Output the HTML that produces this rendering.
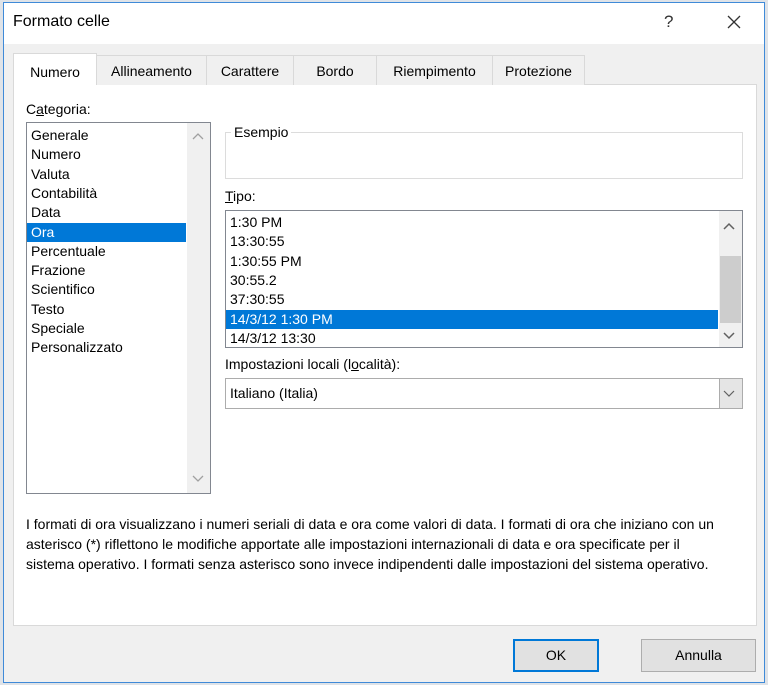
<!DOCTYPE html>
<html><head><meta charset="utf-8"><style>
*{margin:0;padding:0;box-sizing:border-box}
body{width:768px;height:685px;background:#dfe3e8;position:relative;overflow:hidden;font-family:"Liberation Sans",sans-serif;font-size:13.5px;color:#000}
.a{position:absolute}
.win{left:3px;top:2px;width:762px;height:681px;background:#f0f0f0;border:1px solid #3f8ad8}
.title{left:4px;top:3px;width:760px;height:41px;background:#fff}
.tab{top:55px;height:30px;background:#f0f0f0;border:1px solid #d9d9d9;border-bottom:none;text-align:center;line-height:30px;font-size:14px}
.panel{left:13px;top:84px;width:744px;height:542px;background:#fff;border:1px solid #d9d9d9}
.list{background:#fff;border:1px solid #828790}
.it{position:absolute;left:4px;height:19px;line-height:19px;font-size:14px;white-space:nowrap}
.sel{background:#0078d7;color:#fff}
.btn{top:639px;height:33px;background:#e1e1e1;border:1px solid #adadad;text-align:center;line-height:31px;font-size:14px}
</style></head><body>
<div class="a win"></div>
<div class="a title"></div>
<div class="a" style="left:13px;top:13px;font-size:16px">Formato celle</div>
<div class="a" style="left:664px;top:12px;font-size:17px;color:#333">?</div>
<svg class="a" style="left:727px;top:15px" width="14" height="14"><path d="M1 1L13 13M13 1L1 13" stroke="#333" stroke-width="1.3"/></svg>
<div class="a panel"></div>
<div class="a tab" style="left:13px;top:53px;width:84px;height:32px;background:#fff;line-height:36px">Numero</div>
<div class="a tab" style="left:96px;width:111px">Allineamento</div>
<div class="a tab" style="left:206px;width:88px">Carattere</div>
<div class="a tab" style="left:293px;width:84px">Bordo</div>
<div class="a tab" style="left:376px;width:117px">Riempimento</div>
<div class="a tab" style="left:492px;width:93px">Protezione</div>
<div class="a" style="left:26px;top:101px;font-size:14px">C<u>a</u>tegoria:</div>
<div class="a list" style="left:26px;top:122px;width:185px;height:372px">
<div class="a" style="right:0;top:0;width:23px;height:370px;background:#f0f0f0"></div>
<svg class="a" style="left:165px;top:9px" width="12" height="8"><path d="M1 7L6 2L11 7" fill="none" stroke="#a0a0a0" stroke-width="1.3"/></svg>
<svg class="a" style="left:165px;top:352px" width="12" height="8"><path d="M1 1L6 6L11 1" fill="none" stroke="#a0a0a0" stroke-width="1.3"/></svg>
<div class="it" style="top:3px">Generale</div>
<div class="it" style="top:22.3px">Numero</div>
<div class="it" style="top:41.6px">Valuta</div>
<div class="it" style="top:60.9px">Contabilità</div>
<div class="it" style="top:80.2px">Data</div>
<div class="it sel" style="top:99.5px;left:0;width:159px;padding-left:4px">Ora</div>
<div class="it" style="top:118.8px">Percentuale</div>
<div class="it" style="top:138.1px">Frazione</div>
<div class="it" style="top:157.4px">Scientifico</div>
<div class="it" style="top:176.7px">Testo</div>
<div class="it" style="top:196px">Speciale</div>
<div class="it" style="top:215.3px">Personalizzato</div>
</div>
<div class="a" style="left:225px;top:132px;width:518px;height:47px;border:1px solid #dcdcdc"></div>
<div class="a" style="left:231px;top:124px;background:#fff;padding:0 3px;font-size:14px">Esempio</div>
<div class="a" style="left:225px;top:188px;font-size:14px"><u>T</u>ipo:</div>
<div class="a list" style="left:225px;top:210px;width:518px;height:138px">
<div class="a" style="right:0;top:0;width:23px;height:136px;background:#f0f0f0"></div>
<div class="a" style="right:1px;top:45px;width:21px;height:67px;background:#cdcdcd"></div>
<svg class="a" style="left:497px;top:11px" width="12" height="8"><path d="M1 7L6 2L11 7" fill="none" stroke="#606060" stroke-width="1.5"/></svg>
<svg class="a" style="left:497px;top:121px" width="12" height="8"><path d="M1 1L6 6L11 1" fill="none" stroke="#606060" stroke-width="1.5"/></svg>
<div class="it" style="top:2px">1:30 PM</div>
<div class="it" style="top:21.3px">13:30:55</div>
<div class="it" style="top:40.6px">1:30:55 PM</div>
<div class="it" style="top:59.9px">30:55.2</div>
<div class="it" style="top:79.2px">37:30:55</div>
<div class="it sel" style="top:98.5px;left:0;width:492px;padding-left:4px">14/3/12 1:30 PM</div>
<div class="it" style="top:117.8px">14/3/12 13:30</div>
</div>
<div class="a" style="left:225px;top:356px;font-size:14px">Impostazioni locali (l<u>o</u>calità):</div>
<div class="a" style="left:225px;top:378px;width:518px;height:31px;background:#fff;border:1px solid #acacac">
<div class="a" style="left:4px;top:6px;font-size:14px">Italiano (Italia)</div>
<div class="a" style="right:0;top:0;width:23px;height:29px;background:#e5e5e5;border-left:1px solid #acacac"></div>
<svg class="a" style="left:497px;top:11px" width="12" height="8"><path d="M1 1L6 6L11 1" fill="none" stroke="#606060" stroke-width="1.2"/></svg>
</div>
<div class="a" style="left:26px;top:514px;width:740px;font-size:14px;line-height:20px;white-space:nowrap">I formati di ora visualizzano i numeri seriali di data e ora come valori di data. I formati di ora che iniziano con un<br>asterisco (*) riflettono le modifiche apportate alle impostazioni internazionali di data e ora specificate per il<br>sistema operativo. I formati senza asterisco sono invece indipendenti dalle impostazioni del sistema operativo.</div>
<div class="a btn" style="left:513px;width:86px;border:1px solid #0078d7;box-shadow:inset 0 0 0 1px #0078d7">OK</div>
<div class="a btn" style="left:641px;width:115px">Annulla</div>
</body></html>
